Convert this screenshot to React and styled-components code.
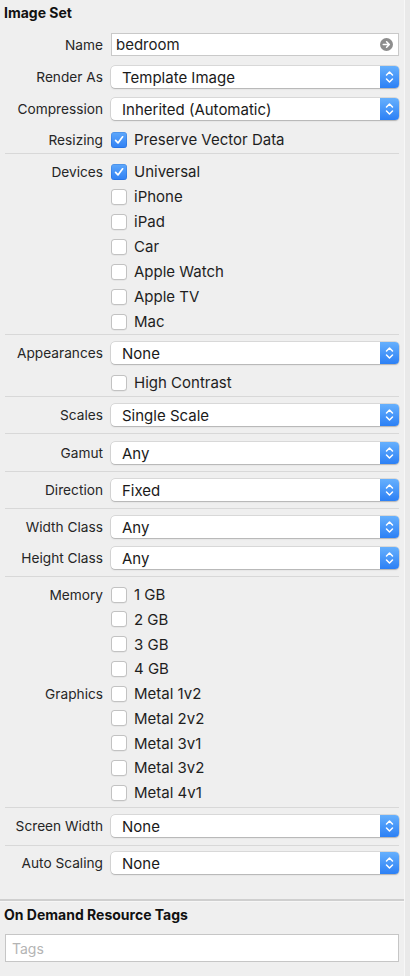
import React from 'react';
import styled, { createGlobalStyle } from 'styled-components';

const GlobalStyle = createGlobalStyle`
  html, body { margin: 0; padding: 0; background: #e9e9e9; }
  body {
    font-family: Inter, "Noto Sans", sans-serif;
    font-size: 15px;
    color: #1e1e1e;
    -webkit-font-smoothing: antialiased;
  }
`;

const Panel = styled.div`
  width: 405px;
  height: 976px;
  background: #efefef;
  border-right: 1px solid #f7f7f7;
  box-sizing: border-box;
  display: flex;
  flex-direction: column;
  overflow: hidden;
`;

const SectionTitle = styled.div`
  height: 26px;
  line-height: 26px;
  padding-left: 4px;
  margin-bottom: ${p => p.$mb ?? 0}px;
  font-weight: 700;
  font-size: 14px;
  color: #111;
`;

const Group = styled.div`
  margin: 0 5px 0 5px;
  padding: ${p => p.$pt}px 0 ${p => p.$pb}px;
  border-bottom: ${p => (p.$sep ? '1px solid #d8d8d8' : 'none')};
  display: flex;
  flex-direction: column;
  gap: ${p => p.$gap ?? 10}px;
`;

const Row = styled.div`
  display: grid;
  grid-template-columns: 98px 1fr;
  column-gap: 8px;
  align-items: center;
  height: ${p => p.$h}px;
`;

const Label = styled.div`
  text-align: right;
  white-space: nowrap;
  font-size: 13.7px;
  color: #262626;
`;

const TextField = styled.div`
  height: 23px;
  background: #fff;
  border: 1px solid #c9c9c9;
  box-sizing: border-box;
  display: flex;
  align-items: center;
  padding: 0 5px 0 4px;
  color: #222;
`;

const FieldText = styled.span`
  flex: 1;
`;

const PopupBox = styled.div`
  height: 22px;
  background: #fff;
  border-radius: 4px;
  box-shadow: 0 0 0 0.5px rgba(0, 0, 0, 0.18), 0 1px 1.5px rgba(0, 0, 0, 0.18);
  display: flex;
  align-items: center;
  overflow: hidden;
`;

const PopupText = styled.span`
  flex: 1;
  padding-left: 11px;
  color: #1a1a1a;
`;

const Stepper = styled.span`
  width: 19px;
  height: 100%;
  background: linear-gradient(#66b0fd, #2c80f5);
  display: flex;
  align-items: center;
  justify-content: center;
`;

const CheckWrap = styled.div`
  display: flex;
  align-items: center;
  gap: 7px;
  color: #1e1e1e;
`;

const Box = styled.span`
  width: 16px;
  height: 16px;
  box-sizing: border-box;
  border-radius: 3.5px;
  display: flex;
  align-items: center;
  justify-content: center;
  background: ${p => (p.$on ? 'linear-gradient(#5ea8fb, #2f80f4)' : '#fff')};
  box-shadow: ${p =>
    p.$on ? 'inset 0 0 0 0.5px rgba(0,60,160,0.35)' : 'inset 0 0 0 1px #c2c2c2, 0 0.5px 0.5px rgba(0,0,0,0.08)'};
`;

const Divider = styled.div`
  height: 2px;
  background: #cfcfcf;
  border-bottom: 1px solid #f6f6f6;
`;

const Spacer = styled.div`
  flex: 1;
`;

const Bottom = styled.div`
  display: flex;
  flex-direction: column;
  padding: 0 5px 14px 0;
`;

const TagsField = styled.div`
  margin-left: 5px;
  height: 28px;
  background: #fff;
  border: 1px solid #c6c6c6;
  box-sizing: border-box;
  display: flex;
  align-items: center;
  padding-left: 6px;
  color: #b4b4b4;
  font-size: 14px;
`;

const Popup = ({ value }) => (
  <PopupBox>
    <PopupText>{value}</PopupText>
    <Stepper>
      <svg width="9" height="14" viewBox="0 0 9 14">
        <path d="M1.5 5 L4.5 2 L7.5 5" fill="none" stroke="#fff" strokeWidth="1.5" strokeLinecap="round" strokeLinejoin="round" />
        <path d="M1.5 9 L4.5 12 L7.5 9" fill="none" stroke="#fff" strokeWidth="1.5" strokeLinecap="round" strokeLinejoin="round" />
      </svg>
    </Stepper>
  </PopupBox>
);

const Check = ({ on, children }) => (
  <CheckWrap>
    <Box $on={on}>
      {on && (
        <svg width="12" height="12" viewBox="0 0 12 12">
          <path d="M2.6 6.4 L5 8.9 L9.6 2.8" fill="none" stroke="#fff" strokeWidth="1.7" strokeLinecap="round" strokeLinejoin="round" />
        </svg>
      )}
    </Box>
    <span>{children}</span>
  </CheckWrap>
);

const PopupRow = ({ label, value }) => (
  <Row $h={22}>
    <Label>{label}</Label>
    <Popup value={value} />
  </Row>
);

const CheckRow = ({ label, on, children }) => (
  <Row $h={16}>
    <Label>{label}</Label>
    <Check on={on}>{children}</Check>
  </Row>
);

export default function App() {
  return (
    <>
      <GlobalStyle />
      <Panel>
        <SectionTitle>Image Set</SectionTitle>
        <Group $pt={7} $pb={7} $sep>
          <Row $h={23}>
            <Label>Name</Label>
            <TextField>
              <FieldText>bedroom</FieldText>
              <svg width="13" height="13" viewBox="0 0 13 13">
                <circle cx="6.5" cy="6.5" r="6.5" fill="#8d8d8d" />
                <path d="M3.3 6.5 H9.2 M6.6 3.8 L9.3 6.5 L6.6 9.2" fill="none" stroke="#fff" strokeWidth="1.6" strokeLinecap="round" strokeLinejoin="round" />
              </svg>
            </TextField>
          </Row>
          <PopupRow label="Render As" value="Template Image" />
          <PopupRow label="Compression" value="Inherited (Automatic)" />
          <CheckRow label="Resizing" on>Preserve Vector Data</CheckRow>
        </Group>
        <Group $pt={8} $pb={6} $gap={9} $sep>
          <CheckRow label="Devices" on>Universal</CheckRow>
          <CheckRow>iPhone</CheckRow>
          <CheckRow>iPad</CheckRow>
          <CheckRow>Car</CheckRow>
          <CheckRow>Apple Watch</CheckRow>
          <CheckRow>Apple TV</CheckRow>
          <CheckRow>Mac</CheckRow>
        </Group>
        <Group $pt={7} $pb={7} $gap={9} $sep>
          <PopupRow label="Appearances" value="None" />
          <CheckRow>High Contrast</CheckRow>
        </Group>
        <Group $pt={7} $pb={7} $sep>
          <PopupRow label="Scales" value="Single Scale" />
        </Group>
        <Group $pt={8} $pb={7} $sep>
          <PopupRow label="Gamut" value="Any" />
        </Group>
        <Group $pt={7} $pb={7} $sep>
          <PopupRow label="Direction" value="Fixed" />
        </Group>
        <Group $pt={7} $pb={7} $gap={9} $sep>
          <PopupRow label="Width Class" value="Any" />
          <PopupRow label="Height Class" value="Any" />
        </Group>
        <Group $pt={8} $pb={8} $gap={8.75} $sep>
          <CheckRow label="Memory">1 GB</CheckRow>
          <CheckRow>2 GB</CheckRow>
          <CheckRow>3 GB</CheckRow>
          <CheckRow>4 GB</CheckRow>
          <CheckRow label="Graphics">Metal 1v2</CheckRow>
          <CheckRow>Metal 2v2</CheckRow>
          <CheckRow>Metal 3v1</CheckRow>
          <CheckRow>Metal 3v2</CheckRow>
          <CheckRow>Metal 4v1</CheckRow>
        </Group>
        <Group $pt={7} $pb={8} $sep>
          <PopupRow label="Screen Width" value="None" />
        </Group>
        <Group $pt={6} $pb={0}>
          <PopupRow label="Auto Scaling" value="None" />
        </Group>
        <Spacer />
        <Divider />
        <Bottom>
          <SectionTitle $mb={6}>On Demand Resource Tags</SectionTitle>
          <TagsField>Tags</TagsField>
        </Bottom>
      </Panel>
    </>
  );
}
